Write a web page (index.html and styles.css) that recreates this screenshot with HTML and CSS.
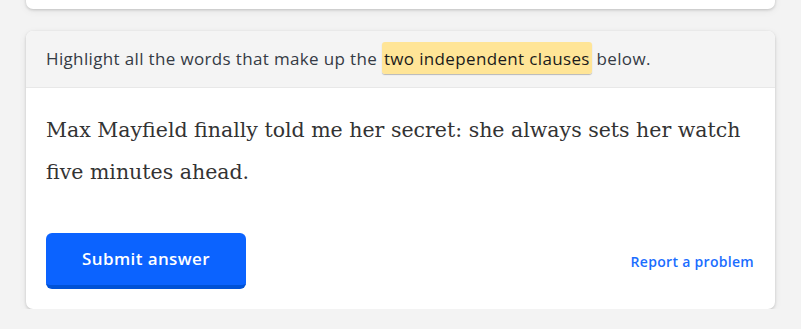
FILE: index.html
```html
<!DOCTYPE html>
<html>
<head>
<meta charset="utf-8">
<link rel="stylesheet" href="styles.css">
</head>
<body>
<div class="page">
  <div class="card card-prev"></div>
  <div class="card">
    <div class="card-header">Highlight all the words that make up the <span class="hl">two independent clauses</span> below.</div>
    <div class="card-body">
      <p class="passage">Max Mayfield finally told me her secret: she always sets her watch five minutes ahead.</p>
      <div class="actions">
        <button class="submit">Submit answer</button>
        <a class="report" href="#">Report a problem</a>
      </div>
    </div>
  </div>
</div>
</body>
</html>
```

FILE: styles.css
```css
html, body {
  margin: 0;
  padding: 0;
  background: #f3f3f3;
}
.page {
  padding: 0 26px;
  display: flex;
  flex-direction: column;
  gap: 22px;
}
.card {
  background: #fff;
  border-radius: 7px;
  box-shadow: 0 1px 3px rgba(0,0,0,0.18), 0 2px 8px rgba(0,0,0,0.06);
  overflow: hidden;
}
.card-prev {
  height: 40px;
  margin-top: -31px;
}
.card-header {
  background: #f4f4f4;
  border-bottom: 1px solid #e8e8e8;
  height: 56px;
  line-height: 56px;
  padding: 0 20px;
  font-family: "Open Sans", "Noto Sans", sans-serif;
  font-size: 17px;
  letter-spacing: 0.35px;
  color: #353b45;
  white-space: nowrap;
}
.hl {
  background: #ffe597;
  border-radius: 3px;
  padding: 5px 2px 4px 2px;
  box-shadow: 0 1px 1px rgba(0,0,0,0.25);
  color: #1b1b1b;
}
.card-body {
  padding: 21px 20px 20px 20px;
}
.passage {
  margin: 0;
  font-family: "DejaVu Serif", Georgia, serif;
  font-size: 20.5px;
  line-height: 42px;
  color: #333;
}
.actions {
  margin-top: 40px;
  display: flex;
  justify-content: space-between;
  align-items: center;
}
.submit {
  width: 200px;
  height: 56px;
  background: #0b63ff;
  color: #fff;
  border: none;
  border-bottom: 4px solid #0052d6;
  border-radius: 6px;
  font-family: "Open Sans", "Noto Sans", sans-serif;
  font-size: 17px;
  letter-spacing: 0.4px;
  font-weight: 600;
  padding: 0 0 2px 0;
}
.report {
  font-family: "Open Sans", "Noto Sans", sans-serif;
  font-size: 14px;
  letter-spacing: 0.3px;
  font-weight: 600;
  color: #1a6dff;
  text-decoration: none;
  margin-right: 1px;
}
```
